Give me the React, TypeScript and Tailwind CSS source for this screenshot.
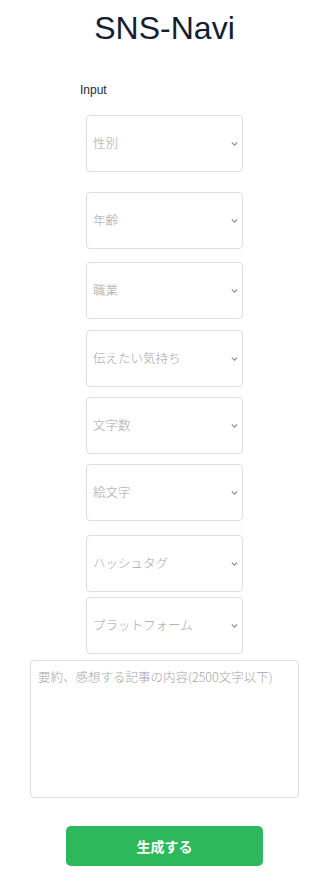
import { useState } from 'react';

const FIELDS = [
  { key: 'gender', label: '性別', mt: 'mt-[17px]' },
  { key: 'age', label: '年齢', mt: 'mt-[20px]' },
  { key: 'job', label: '職業', mt: 'mt-[13px]' },
  { key: 'feeling', label: '伝えたい気持ち', mt: 'mt-[11px]' },
  { key: 'length', label: '文字数', mt: 'mt-[10px]' },
  { key: 'emoji', label: '絵文字', mt: 'mt-[10px]' },
  { key: 'hashtag', label: 'ハッシュタグ', mt: 'mt-[14px]' },
  { key: 'platform', label: 'プラットフォーム', mt: 'mt-[5px]' },
];

function Chevron() {
  return (
    <svg width="7" height="5" viewBox="0 0 7 5" className="pointer-events-none absolute right-[5px] top-1/2 -translate-y-1/2">
      <path d="M0.8 1 L3.5 3.7 L6.2 1" fill="none" stroke="#8f949c" strokeWidth="1.1" />
    </svg>
  );
}

export default function App() {
  const [values, setValues] = useState<Record<string, string>>({});
  const [text, setText] = useState('');

  return (
    <div className="w-[329px] min-h-[891px] bg-white flex flex-col items-center font-['Liberation_Sans','Noto_Sans_CJK_JP',sans-serif]">
      <h1 className="mt-[12px] text-[32px] leading-[32px] text-[#151d33]">SNS-Navi</h1>

      <div className="w-full mt-[38px] pl-[80px] text-[12px] leading-[16px] text-[#1f2937]">Input</div>

      {FIELDS.map((f) => (
        <div key={f.key} className={`relative w-[157px] h-[57px] ${f.mt}`}>
          <select
            value={values[f.key] ?? ''}
            onChange={(e) => setValues({ ...values, [f.key]: e.target.value })}
            className="w-full h-full appearance-none bg-white border border-[#dedede] rounded-[4px] pl-[6px] pr-[16px] pb-[1px] text-[12.5px] font-light text-[#a6a6a6] outline-none font-['Noto_Sans_CJK_JP',sans-serif]"
          >
            <option value="" disabled>{f.label}</option>
          </select>
          <Chevron />
        </div>
      ))}

      <textarea
        value={text}
        onChange={(e) => setText(e.target.value)}
        placeholder="要約、感想する記事の内容(2500文字以下)"
        className="mt-[6px] w-[269px] h-[138px] resize-none border border-[#dedede] rounded-[4px] px-[7px] py-[6px] text-[12.5px] leading-[20px] font-light text-[#374151] placeholder:text-[#a6a6a6] outline-none font-['Noto_Sans_CJK_JP',sans-serif]"
      />

      <button className="mt-[28px] w-[197px] h-[40px] rounded-[5px] bg-[#2eb85c] text-white text-[14px] font-bold font-['Noto_Sans_CJK_JP',sans-serif]">
        生成する
      </button>
    </div>
  );
}
